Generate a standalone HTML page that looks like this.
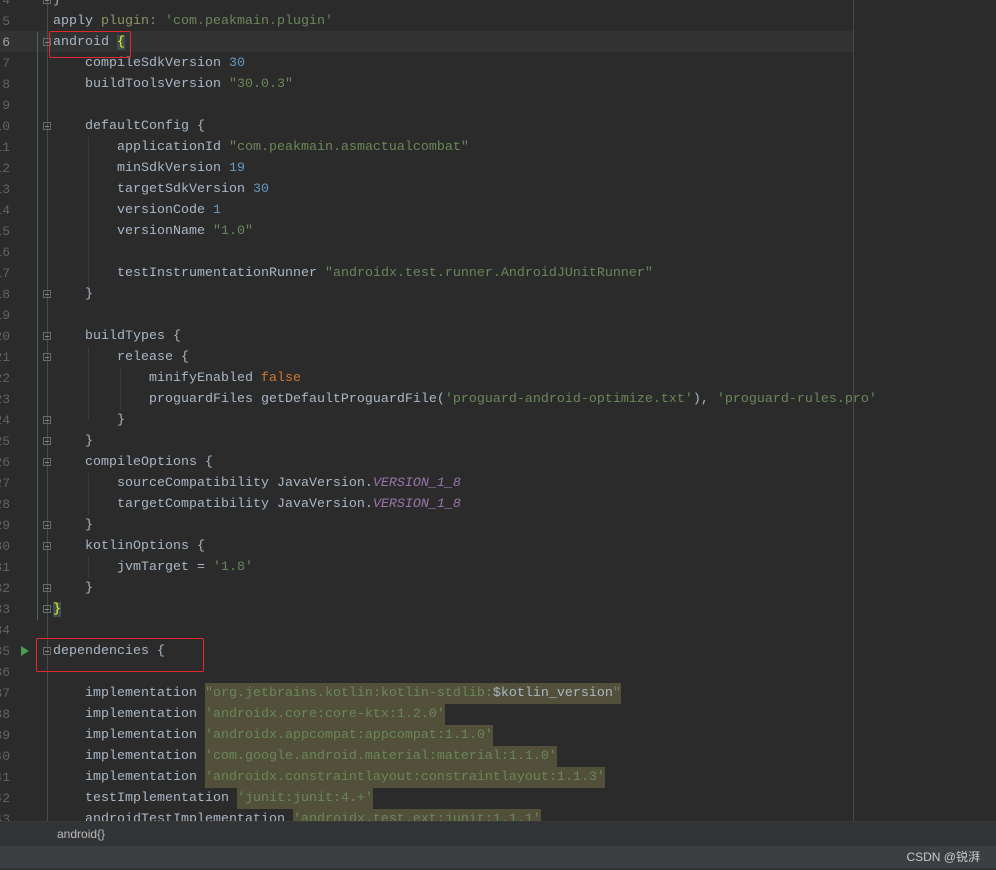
<!DOCTYPE html>
<html><head><meta charset="utf-8"><style>
html,body{margin:0;padding:0;}
body{width:996px;height:870px;background:#2b2b2b;position:relative;overflow:hidden;font-family:"Liberation Mono",monospace;font-size:13.33px;color:#a9b7c6;}
.l{position:absolute;left:53px;height:21px;line-height:21px;white-space:pre;}
.n{position:absolute;right:986px;height:21px;line-height:21px;color:#606366;font-size:13px;text-align:right;}
.s{color:#6a8759}.num{color:#6897bb}.k{color:#cc7832}.it{color:#9876aa;font-style:italic}.pl{color:#8a9466}
.hl{background:#52503a;display:inline-block;height:21px;vertical-align:top}
.f{position:absolute;left:43px;width:8px;height:8px;border:1px solid #6a6a6a;box-sizing:border-box;}
.f:after{content:"";position:absolute;left:1px;top:3px;width:4px;height:1px;background:#8a8a8a}
.ig{position:absolute;width:1px;background:#3b3b3b}
.box{position:absolute;border:1px solid #e0282e;border-radius:2px;}
</style></head><body>
<div style="position:absolute;left:0;top:31px;width:853px;height:21px;background:#323232"></div>
<div style="position:absolute;left:853px;top:0;width:1px;height:821px;background:#484848"></div>
<div style="position:absolute;left:37px;top:32px;width:1px;height:588px;background:#4a6660"></div>
<div style="position:absolute;left:47px;top:0;width:1px;height:821px;background:#4a4a4a"></div>
<div class="ig" style="left:88px;top:137px;height:150px"></div>
<div class="ig" style="left:88px;top:347px;height:72px"></div>
<div class="ig" style="left:120px;top:368px;height:42px"></div>
<div class="ig" style="left:88px;top:473px;height:42px"></div>
<div class="ig" style="left:88px;top:557px;height:21px"></div>

<div id="c"></div>
<script>
var L={
4:'}',
5:'apply <span class="pl">plugin:</span> <span class="s">\'com.peakmain.plugin\'</span>',
6:'android <span style="color:#ffef28;background:#3b514d">{</span>',
7:'    compileSdkVersion <span class="num">30</span>',
8:'    buildToolsVersion <span class="s">"30.0.3"</span>',
10:'    defaultConfig {',
11:'        applicationId <span class="s">"com.peakmain.asmactualcombat"</span>',
12:'        minSdkVersion <span class="num">19</span>',
13:'        targetSdkVersion <span class="num">30</span>',
14:'        versionCode <span class="num">1</span>',
15:'        versionName <span class="s">"1.0"</span>',
17:'        testInstrumentationRunner <span class="s">"androidx.test.runner.AndroidJUnitRunner"</span>',
18:'    }',
20:'    buildTypes {',
21:'        release {',
22:'            minifyEnabled <span class="k">false</span>',
23:'            proguardFiles getDefaultProguardFile(<span class="s">\'proguard-android-optimize.txt\'</span>), <span class="s">\'proguard-rules.pro\'</span>',
24:'        }',
25:'    }',
26:'    compileOptions {',
27:'        sourceCompatibility JavaVersion.<span class="it">VERSION_1_8</span>',
28:'        targetCompatibility JavaVersion.<span class="it">VERSION_1_8</span>',
29:'    }',
30:'    kotlinOptions {',
31:'        jvmTarget = <span class="s">\'1.8\'</span>',
32:'    }',
33:'<span style="color:#ffef28;background:#3b514d">}</span>',
35:'dependencies {',
37:'    implementation <span class="hl"><span class="s">"org.jetbrains.kotlin:kotlin-stdlib:</span>$kotlin_version<span class="s">"</span></span>',
38:'    implementation <span class="hl s">\'androidx.core:core-ktx:1.2.0\'</span>',
39:'    implementation <span class="hl s">\'androidx.appcompat:appcompat:1.1.0\'</span>',
40:'    implementation <span class="hl s">\'com.google.android.material:material:1.1.0\'</span>',
41:'    implementation <span class="hl s">\'androidx.constraintlayout:constraintlayout:1.1.3\'</span>',
42:'    testImplementation <span class="hl s">\'junit:junit:4.+\'</span>',
43:'    androidTestImplementation <span class="hl s">\'androidx.test.ext:junit:1.1.1\'</span>'
};
var h='';
for(var n=4;n<=43;n++){var t=21*(n-4)-10;
h+='<div class="n" style="top:'+t+'px;'+(n==6?'color:#a4a3a3':'')+'">'+n+'</div>';
if(L[n])h+='<div class="l" style="top:'+t+'px">'+L[n]+'</div>';}
[4,6,10,18,20,21,24,25,26,29,30,32,33,35].forEach(function(n){h+='<div class="f" style="top:'+(21*(n-4)-4)+'px"></div>';});
document.getElementById('c').innerHTML=h;
</script>
<div class="box" style="left:49px;top:31px;width:80px;height:25px"></div>
<div class="box" style="left:36px;top:638px;width:166px;height:32px"></div>
<div style="position:absolute;left:21px;top:646px;width:0;height:0;border-left:8px solid #499c54;border-top:5px solid transparent;border-bottom:5px solid transparent"></div>

<div style="position:absolute;left:0;top:821px;width:996px;height:25px;background:#313335;border-top:1px solid #3a3a3a"></div>
<div style="position:absolute;left:57px;top:824px;line-height:20px;font-family:'Liberation Sans',sans-serif;font-size:12px;color:#bbbbbb">android{}</div>
<div style="position:absolute;left:0;top:846px;width:996px;height:22px;background:#3c3f41"></div>
<div style="position:absolute;left:0;top:868px;width:996px;height:2px;background:#323232"></div>
<div style="position:absolute;right:16px;top:847px;line-height:20px;font-family:'Liberation Sans','Noto Sans CJK SC',sans-serif;font-size:12px;color:#c8c8c8">CSDN @锐湃</div>
</body></html>
